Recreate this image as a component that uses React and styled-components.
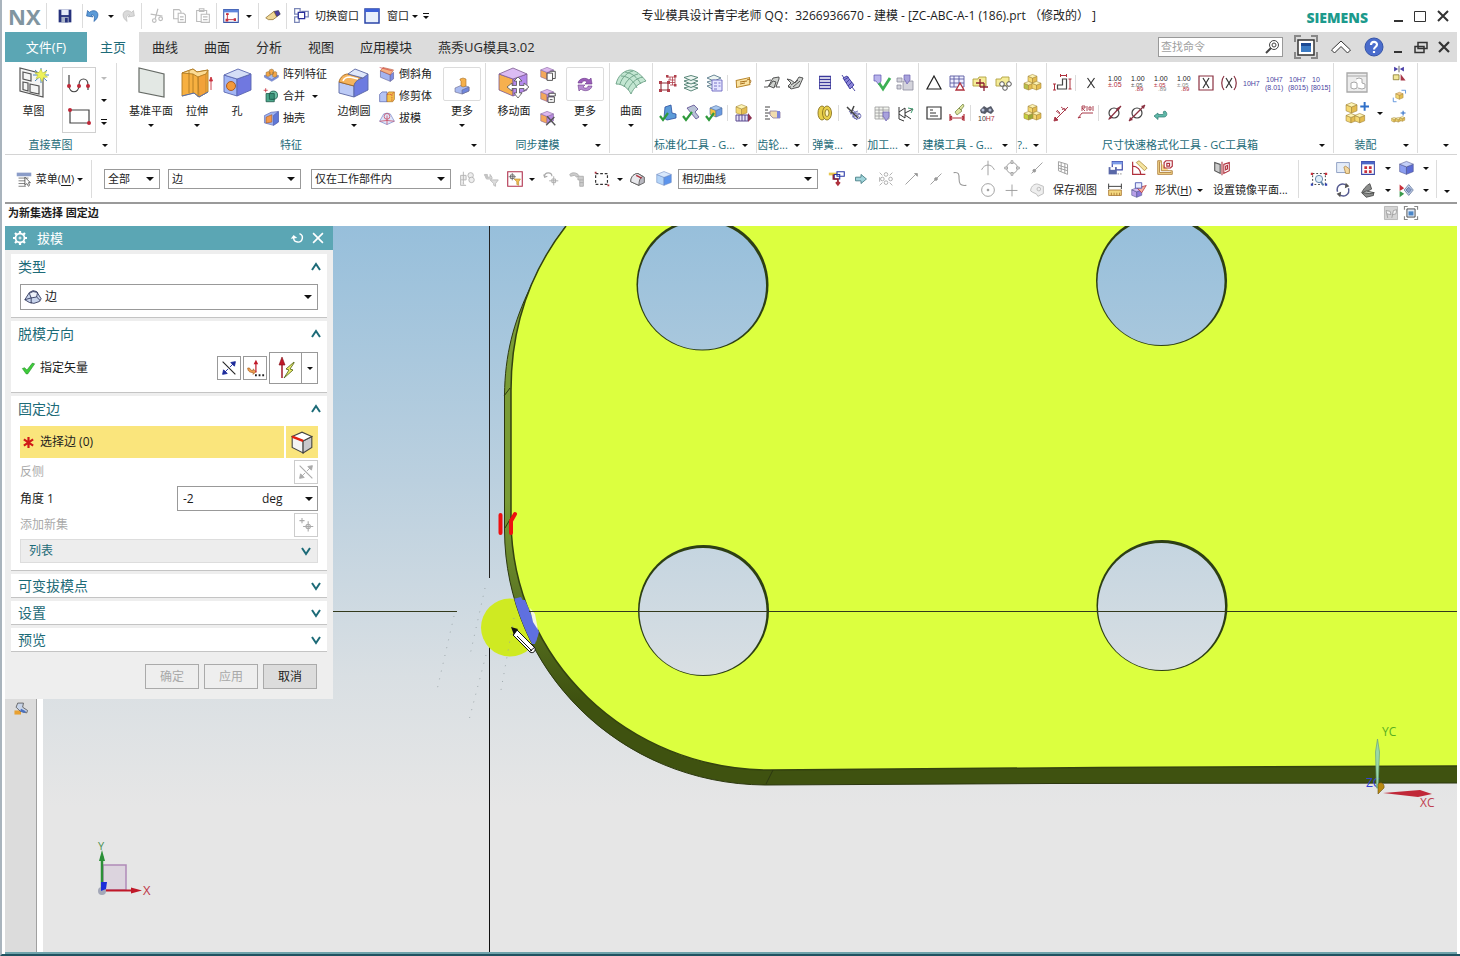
import React from "react";
import styled, { createGlobalStyle } from "styled-components";

const GlobalStyle = createGlobalStyle`
  * { box-sizing: border-box; }
  body {
    margin: 0;
    background: #fff;
    color: #1c1c1c;
    font-family: "Open Sans", "Noto Sans CJK SC", sans-serif;
    font-size: 11px;
    line-height: 16px;
  }
  button, input, select { font: inherit; color: inherit; margin: 0; }
  svg { display: block; flex: none; }
`;

const teal = "#1d6b78";

/* ---------- drawings ---------- */

const Cube = ({ x = 0, y = 0, s = 10, t = "#e8e8ff", l = "#8e9be8", r = "#6f7fe0", k = "#4a4f8a" }) => (
  <g transform={`translate(${x} ${y}) scale(${s / 10})`} stroke={k} strokeWidth={6 / s} strokeLinejoin="round">
    <path fill={l} d="M0 2.500 5 4.500V10L0 8z" />
    <path fill={r} d="M5 4.500 10 2.500V8L5 10z" />
    <path fill={t} d="M0 2.500 5 .5l5 2-5 2z" />
  </g>
);
const gold = { t: "#fdf4b4", l: "#f4d872", r: "#e4bc50", k: "#a8893a" };
const pink = { t: "#dcb8ee", l: "#f4a85a", r: "#b88ae0", k: "#7d5c9c" };

const Tol = ({ b, c1 = "#555", c2 = "#b22b3c" }) => (
  <g fontFamily="Liberation Sans, sans-serif" fontSize="7">
    <text x="5" y="9" fill="#222">1.00</text>
    <text x="5" y="15" fill={c1} fontSize={b ? 6 : 7}>±.05</text>
    {b && <text x="9" y="19" fill={c2} fontSize="6">.89</text>}
  </g>
);
const Fit = ({ a, b }) => (
  <g fontFamily="Liberation Sans, sans-serif" fill="#4a3fa0">
    <text x="2" y={b ? 10 : 14} fontSize="7">{a}</text>
    {b && <text x="1" y="18" fontSize="7">{b}</text>}
  </g>
);

const big = {
  sketch: (
    <g fill="none" stroke="#555" strokeWidth="1.2">
      <path fill="#f4f5f4" d="M2 1v23l23 6V7z" />
      <path d="M5 5l8 2v7l-8-2zM5 15l5 1v8l-5-1.500zM12 17l9 2v8l-9-2z" />
      <path stroke="#4b86b8" d="M23 1v15M15 8h16M17 3l12 11M29 3 17 14" strokeWidth="1" />
      <path fill="#eef25a" stroke="#c3c93c" strokeWidth=".6" d="M23 2l1.500 4 4-1.500-2 3.500 3 2-4 .5-1.500 4-2-4-4 1 2-3.500-3-2 4-.5z" />
    </g>
  ),
  plane: <path fill="#e3e8e4" stroke="#666b66" strokeWidth="1.200" d="M4 1v24l25 5V7z" />,
  extrude: (
    <g stroke="#b07a22" strokeWidth=".9">
      <path fill="#f7b040" d="M1 6l11-4 4 3 11-2v22l-9 5-5-4-12 3z" />
      <path fill="#fcdb93" d="M1 6l11-4 4 3 11-2-2 4-8 3-5-3z" />
      <path fill="#f2a23a" d="M17 10l8-3v19l-7 4z" strokeWidth=".6" />
      <path fill="none" d="M12 7v19M17 10v20M8 4v22" />
      <path fill="none" stroke="#4a6fc4" d="M1 29l12-3 5 4 9-5" />
      <path fill="#c8303c" stroke="#c8303c" d="M30 23V14M28.500 14h3L30 10z" />
    </g>
  ),
  hole: (
    <g stroke="#5a66b0" strokeWidth=".9">
      <path fill="#a3b6f4" d="M3 8l13 4v17L3 25z" />
      <path fill="#7078e0" d="M16 12l14-5v16l-14 6z" />
      <path fill="#d5def6" d="M3 8 17 2l13 5-14 5z" />
      <circle cx="10" cy="19" r="4.500" fill="#f49a3a" stroke="#a6521a" />
    </g>
  ),
  blend: (
    <g stroke="#5a66a4" strokeWidth=".9">
      <path fill="#bccaf6" d="M1 15v11l15 4V19z" />
      <path fill="#f5b45e" d="M1 15c1-5 5-8 9-8l15 4c-4 1-8 3-9 8z" stroke="#a5661c" />
      <path fill="#6d7be0" d="M16 19c1-5 5-7 9-8l5-4v16l-14 7z" />
      <path fill="#dfe7fa" d="M10 7l7-5 13 5-5 4z" />
      <path fill="none" stroke="#fff" strokeWidth="1.500" d="M5 14c1-3 4-4 7-4l8 2" />
    </g>
  ),
  move: (
    <g stroke="#7c5a90" strokeWidth=".8">
      <path fill="#f6b04e" d="M1 7l14 5v17L1 23z" />
      <path fill="#b48aec" d="M15 12l14-5v16l-14 6z" />
      <path fill="#dcbcf4" d="M1 7 15 1l14 6-14 5z" />
      <path fill="#fff" stroke="#555" d="M20 10l4 4h-2.500v4.500H26V16l5 4-5 4v-2.500h-4.500V26H24l-4 5-4-5h2.500v-4.500H14V24l-5-4 5-4v2.500h4.500V14H16z" />
    </g>
  ),
  surface: (
    <g stroke="#6a9f84" strokeWidth=".9" fill="none">
      <path fill="#c3e6d2" d="M1 17C3 9 8 4 15 3c6 0 11 5 16 11-7 2-12 6-15 13C13 21 8 17 1 17z" />
      <path d="M6 9c7 0 13 5 16 12M10 5c7 1 12 5 16 12M5 17C7 10 13 5 18 4M9 20c2-7 9-12 14-13M13 23c2-6 8-12 15-13" />
    </g>
  ),
  more1: (
    <g stroke="#6a6a8c" strokeWidth=".6">
      <path fill="#a9baf0" d="M9 20l7-3 7 2v4l-7 3-7-2z" />
      <path fill="#6f86dc" d="M16 22l7-3v4l-7 3z" />
      <path fill="#f5b04a" stroke="#a8702a" d="M14 11l3-1 3 1v7l-3 1-2-1v-5l-1-1z" />
    </g>
  ),
  more2: (
    <g fill="#9a5cb8" stroke="#6d3a8c" strokeWidth=".6">
      <path d="M9 15c1-5 8-6 11-3l2-2 1 6h-7l2-2c-2-2-5-1-5 1z" />
      <path fill="#b68ad0" d="M23 18c-1 5-8 6-11 3l-2 2-1-6h7l-2 2c2 2 5 1 5-1z" />
    </g>
  ),
};

const ic = {
  pattern: <g stroke="#8a6a3a" strokeWidth=".6"><path fill="#a9bdf2" stroke="#5a6ab0" d="M3 13l8-3 9 3-8 5z" /><path fill="#7f93e0" stroke="#5a6ab0" d="M3 13v2l9 5 8-5v-2l-8 5z" /><path fill="#f3a545" d="M5 13V9l3-1 2 1v4l-3 1zM9 11V6l3-1 2 1v5l-3 1zM13 14V9l3-1 2 1v5l-3 1z" /></g>,
  unite: <g fill="#4ca88c" stroke="#1d5a4a"><path d="M5 8h10v10H5z" /><circle cx="14" cy="10" r="5" fill="#6cc0a6" /><path d="M9 8h6v7H9z" fill="#3a9278" /><path stroke="#c8303c" d="M2 4h5M4.500 1.500v5" /></g>,
  shell: <g stroke="#4f5aa8" strokeWidth=".7"><path fill="#9db2f0" d="M3 8l8-4 9-1v13l-6 4-11-3z" /><path fill="#f3984a" d="M5 10l7-3v9l-7 1z" stroke="#a5561c" /><path fill="#5f78d8" d="M14 8l6-5v13l-6 4z" /></g>,
  chamfer: <g stroke="#5a5a90" strokeWidth=".7"><path fill="#a4b4f0" d="M3 7l12 5v8L3 15z" /><path fill="#7d8ce4" d="M15 12l4-3v8l-4 3z" /><path fill="#f6b183" stroke="#b04a34" d="M3 7l3-4 13 3-4 6z" /><path fill="none" stroke="#c8303c" d="M2 3l15 4" /></g>,
  trim: <g strokeWidth=".8"><path fill="#b5c4f4" stroke="#4f5aa8" d="M2 9l3-3h6v12H2z" /><path fill="#f5c34a" stroke="#a5661c" d="M11 9l2-3h7v9l-2 3h-7z" /><path fill="none" stroke="#c8303c" strokeDasharray="2 1" d="M17 9v9M11 9h6l3-3" /></g>,
  draft: <g fill="none" stroke="#7c88c8" strokeWidth=".9"><path fill="#dfe6fa" d="M2 15l5-9 4-1 4 1 5 9-9 4z" /><path stroke="#c8405a" d="M11 19V8M2 15l9-1 9 1" /><circle cx="11" cy="9" r="3.500" stroke="#c8405a" /></g>,
  mf1: <g><Cube x={3} y={3} s={14} {...pink} /><path fill="#fff" stroke="#444" d="M10 10h6v8h-6zM13 8h6v8h-3" /></g>,
  mf2: <g><Cube x={3} y={3} s={14} {...pink} /><path fill="#fff" stroke="#444" d="M11 12h7v6h-7zM12 8h7v3h-7zM13 15h3" /></g>,
  mf3: <g><Cube x={3} y={3} s={14} {...pink} /><path stroke="#555" strokeWidth="1.500" d="M10 9l9 10M18 10l-9 9" /></g>,
  std1: <g fill="none" stroke="#b0404c" strokeWidth="1.1"><path d="M4 11h7v7H4z" stroke="#8a3038" /><path d="M10 5h8v8h-5M13 5v3M15.500 5v8M11 8h7M12 10.500h6" strokeWidth=".8" /><path fill="#b0404c" stroke="none" d="M2 9h3v3H2zM10 9h3v3h-3zM2 17h3v3H2zM10 17h3v3h-3zM9 3h2.500v2.500H9zM17 3h2.500v2.500H17zM17 12h2.500v2.500H17z" /></g>,
  layers: <g fill="#eef6f2" stroke="#4a7a6c" strokeWidth=".9"><path d="M4 16l7-2 7 2-7 3z" /><path d="M4 12.500l7-2 7 2-7 3z" /><path d="M4 9l7-2 7 2-7 3z" /><path d="M4 5.500l7-2 7 2-7 3z" /></g>,
  layers2: <g fill="#eef6f2" stroke="#5a7a8c" strokeWidth=".9"><path d="M4 14l7-2 7 2-7 4zM4 10l7-2 7 2-7 4zM4 6l7-3 7 3-7 3z" /><path fill="#e5e5ff" stroke="#6a64c0" d="M9 8h10v11H9z" /><path stroke="#6a64c0" d="M11 11h3M15.500 11h2M11 14h3M15.500 14h2M11 17h3" /></g>,
  tag: <g><path fill="#fae2a0" stroke="#b8862c" d="M4 9l13-4 1 7-13 4z" transform="rotate(5 11 11)" /><path stroke="#a8701c" fill="none" d="M8 10l7-1M8 12l5-1M15 8c3-2 5 1 3 3" /></g>,
  chk1: <g><path fill="#5c9bd8" stroke="#2c4fa0" strokeWidth=".8" d="M8 5l6-2 1 8 4 1v4l-9 2-3-2z" /><path stroke="#2f9a3c" strokeWidth="2.200" fill="none" d="M3 14l3 4 5-7" /></g>,
  chk2: <g><path fill="#b9c3d6" stroke="#5a4a90" strokeWidth=".8" d="M7 6l7-3 4 4-3 3 4 5-3 2-5-6z" /><path stroke="#2f9a3c" strokeWidth="2.200" fill="none" d="M3 14l3 4 6-8" /></g>,
  chk3: <g><Cube x={7} y={3} s={12} t="#a8c8f0" l="#f0c040" r="#6a9ae0" k="#4a6aa0" /><path stroke="#2f9a3c" strokeWidth="2.200" fill="none" d="M3 14l3 4 5-7" /></g>,
  boxar: <g><Cube x={4} y={2} s={11} {...gold} /><path fill="#e8e4f8" stroke="#5a4a90" d="M4 13h12v6H4zM7 13v6M10 13v6M13 13v6" /><path fill="#8a3050" d="M16 11l4 5-4 4z" /></g>,
  gear1: <g fill="#cfd2cf" stroke="#444" strokeWidth=".9"><path d="M3 15h4l5-9 6-1v2l-3 8h4M8 14l4-5 3 1-2 6zM4 9l6-1" /></g>,
  gear2: <g fill="#cfd2cf" stroke="#444" strokeWidth=".9"><path d="M3 7l4 1 4 3 4-6 4 1-4 9-8 2-3-3 3-3zM7 13l7-5M9 15l7-6M4 15h3" /></g>,
  gear3: <g><path stroke="#444" d="M4 5h5M4 8h3M4 11h5M4 14h3M4 17h5" /><path fill="#f0dcae" stroke="#8a7aa0" strokeWidth=".8" d="M9 9h6l4 1v6h-7l-3-3z" /><path fill="#7d84d8" d="M16 9h3v7h-3z" /></g>,
  spring1: <g stroke="#3c3a9c" strokeWidth="1.600" fill="none"><path d="M5 4.500h12M5 7.500h12M5 10.500h12M5 13.500h12M5 16.500h12" /><path strokeWidth=".8" d="M5.500 4v13M16.500 4v13" /></g>,
  spring2: <g fill="#8a84d8" stroke="#3c3a9c" strokeWidth=".9"><path d="M6 6l4-2 7 9-4 4z" /><path fill="none" d="M5 3l2 3M7 8l5-3M9 11l4-4M11 14l4-4M15 15l3 4" /></g>,
  spring3: <g fill="#e8cf4a" stroke="#8a7420" strokeWidth=".9"><ellipse cx="8" cy="11" rx="4" ry="7" /><ellipse cx="13" cy="11" rx="4.500" ry="7" /><ellipse cx="13" cy="11" rx="2" ry="3.500" fill="#fff7c0" /></g>,
  spring4: <g fill="none" stroke="#5a5aa8" strokeWidth=".8"><path d="M6 9l8 9M9 7l8 9M7 12l8-3M9 15l8-3" /><ellipse cx="14" cy="14" rx="4" ry="3" /><path stroke="#444" strokeWidth="1.500" d="M4 5l11 11M11 4L8 11" /></g>,
  mach1: <g><path fill="#b9b4ec" stroke="#5a50b0" strokeWidth=".7" d="M3 3h7v6l-2 4-3-4H3z" /><path stroke="#3cb054" strokeWidth="2.800" fill="none" d="M8 11l4 6 7-11" /></g>,
  mach2: <g><path fill="#d4d4dc" stroke="#8a8a9c" strokeWidth=".8" d="M9 9h10v9H9zM3 6h5v4H3zM3 13h4v4H3z" /><path fill="#a8a2dc" stroke="#6a60b0" strokeWidth=".7" d="M10 3h6v5l-3 4-2-4h-1z" /></g>,
  mach3: <g><path fill="#f2f4ee" stroke="#9a9a9a" strokeWidth=".8" d="M4 5h14v12H4zM4 8h14M4 11h14M4 14h14M8 5v12M12 5v12" /><path fill="#a8a2dc" stroke="#6a60b0" strokeWidth=".7" d="M12 10h6v5l-3 4-2-4h-1z" /></g>,
  mach4: <g fill="none" stroke="#333"><path d="M5 5v12l5 2M5 10l6-4v10l-6-4M11 11l8-4M11 13l6 4" /><path stroke="#3a9a6c" d="M14 6l5 1-2 4" /></g>,
  tri: <path fill="none" stroke="#222" strokeWidth="1.200" d="M11 4l7 13H4z" />,
  tbl: <g><path fill="#f0f0ff" stroke="#5a5aa0" strokeWidth=".9" d="M4 4h14v11H4zM4 7h14M4 11h14M8 4v11M13 4v11" /><path fill="#fff" stroke="#b0303c" strokeWidth="1.300" d="M14 11l4 7h-8z" /></g>,
  note: <g fill="none" stroke="#333" strokeWidth="1.200"><path d="M4 5h14v12H4zM7 8h3M7 11h6M7 14h8" /></g>,
  brush: <g><path fill="#dfe5a0" stroke="#7a8a4a" strokeWidth=".8" d="M9 10l4-4 3 3-5 4zM13 6l4-4 1 2-3 4z" /><path stroke="#b0303c" strokeWidth="1.200" d="M4 12v7M18 12v7M4 16h14M6 14l-2 2 2 2M16 14l2 2-2 2" fill="none" /></g>,
  fold1: <g><path fill="#f5ec98" stroke="#b0a040" strokeWidth=".9" d="M4 7h5l1-2h7v9H4z" /><path stroke="#8a2030" strokeWidth="1.300" d="M11 7v8M7 11h8M15 11v8M11 15h8" /></g>,
  fold2: <g><path fill="#f5ec98" stroke="#b0a040" strokeWidth=".9" d="M4 7h5l1-2h7v9H4z" /><g fill="#fff" stroke="#555"><circle cx="10" cy="12" r="2.300" /><circle cx="13" cy="16" r="2.300" /><circle cx="17" cy="12" r="2.300" /></g></g>,
  find: <g><path fill="#555a68" d="M5 8l4-4 3 2 4-2 3 5-3 3-4-2-2 2-4-1z" /><circle cx="8" cy="8" r="1.500" fill="#b8c0d8" /><circle cx="15" cy="8" r="1.500" fill="#b8c0d8" /><text x="3" y="19" fontSize="7" fontFamily="Liberation Sans, sans-serif" fill="#333">10<tspan fill="#b0303c">H7</tspan></text></g>,
  gbox1: <g><Cube x={7} y={2} s={9} {...gold} /><Cube x={3} y={9} s={9} {...gold} l="#b8c04a" /><Cube x={11} y={9} s={9} {...gold} /></g>,
  gbox2: <g><Cube x={7} y={2} s={9} {...gold} /><Cube x={11} y={9} s={9} {...gold} /><Cube x={3} y={9} s={9} {...gold} l="#c4d040" r="#9aa83a" /></g>,
  dim: <g fill="none" stroke="#444"><path strokeWidth="1.200" d="M6.500 17h9V7h-4v6h-5z" /><path stroke="#b0303c" d="M3.500 12v6M2 12h3M2 18h3M19 7v10M17.500 7h3M17.500 17h3M9.500 2v3M15.500 2v3M10 3.500h5" /></g>,
  x: <path stroke="#333" fill="none" strokeWidth="1.200" d="M7.500 6l7 10M14.500 6l-7 10" />,
  t1: <Tol c1="#b22b3c" />,
  t2: <Tol b />,
  t3: <Tol b c1="#b22b3c" c2="#888" />,
  t4: <Tol b c1="#888" />,
  boxx: <g fill="none" strokeWidth="1.200"><path stroke="#8a3040" d="M4 4h14v14H4z" /><path stroke="#333" d="M8 6l6 10M14 6L8 16" /></g>,
  parx: <g fill="none" strokeWidth="1.200"><path stroke="#8a3040" d="M6 4C3 8 3 14 6 18M16 4c3 4 3 10 0 14" /><path stroke="#333" d="M8 6l6 10M14 6L8 16" /></g>,
  f1: <Fit a="10H7" />,
  f2: <Fit a="10H7" b="(8.01)" />,
  f3: <Fit a="10H7" b="(8015)" />,
  f4: <Fit a="  10" b="[8015]" />,
  lead1: <g fill="none" stroke="#a83848"><path d="M4 18L17 5" /><path strokeWidth=".9" d="M5 9l4 3M6 8l3 3M10 5l4 3M11 8c2-3 5-1 3 1" /><path fill="#a83848" d="M3 19l1-4 3 3z" /></g>,
  lead2: <g fill="none" stroke="#a83848"><path d="M4 16l4-5h11M4 16l3-1" /><path strokeWidth=".9" d="M8 9V4h3v2H8l3 3M13 4v5M15 5v3h2V5zM19 4v5" /></g>,
  dia1: <g fill="none" stroke="#444" strokeWidth="1.200"><circle cx="11" cy="11" r="5" /><path stroke="#8a3040" d="M6 17L18 4" /><path fill="#8a3040" stroke="none" d="M8 13l1 3-4 2zM13 9l1-3 4-2-2 4z" /></g>,
  dia2: <g fill="none" stroke="#444" strokeWidth="1.200"><circle cx="11" cy="11" r="5" /><path stroke="#8a3040" d="M3 19L19 3" /><path fill="#8a3040" stroke="none" d="M3 19l1-4 3 3zM19 3l-1 4-3-3z" /></g>,
  ret: <path fill="#5fb8a8" stroke="#2c7a70" strokeWidth=".7" d="M5 14l4-3v1.500h4c2 0 2-1.500 1-2.500l2-1c3 2 2 6-1 6H9v2.500z" />,
  asm0: <g fill="#ececec" stroke="#a8a8a8"><path d="M1 1h20v19H1z" strokeWidth="1.300" /><path d="M1 4h20" /><path fill="#fff" d="M5 11l3-1 3 1v5l-3 1-3-1zM10 7l3-1 3 1v4l3 1v4l-3 1-4-1" /></g>,
  asm1: <g><Cube x={1} y={1} s={10} {...gold} /><Cube x={1} y={11} s={9} {...gold} /><Cube x={9} y={11} s={9} {...gold} /><path stroke="#2f6fc8" strokeWidth="1.800" d="M18 1v8M14 5h8" /></g>,
  mir: <g><path fill="#4a3fa8" d="M5 2l5 3-5 3zM17 2l-5 3 5 3z" /><path stroke="#444" d="M11 1v8" /><path fill="#f2e89a" stroke="#8a7a30" d="M4 12h7v6H4z" /><path fill="#a83848" d="M13 11l6 8h-6z" /></g>,
  asm2: <g><path fill="none" stroke="#4a86d8" d="M4 13v5h4M14 4h5v4" /><Cube x={7} y={6} s={9} {...gold} t="#f7c98a" /></g>,
  asm3: <g><Cube x={2} y={10} s={6} {...gold} /><Cube x={7} y={10} s={6} {...gold} /><Cube x={12} y={9} s={6} {...gold} /><path stroke="#2f6fc8" strokeWidth="1.300" d="M16 2v6M13 5h6" /></g>,

  save: <g><path fill="#26327c" d="M4 4h14v14H4z" /><path fill="#e6ecf8" d="M7 4h8v6H7z" /><path fill="#aab4c8" d="M7 12h8v6H7z" /><path fill="#26327c" d="M11 13h3v5h-3z" /></g>,
  undo: <path fill="#5c9bd8" stroke="#2a62a8" strokeWidth=".8" d="M4 11l1-6 2 2c5-4 11-1 9 5-1 3-3 4-4 5 1-4 1-8-3-7l2 2z" />,
  redo: <path fill="#dadada" stroke="#bbb" strokeWidth=".8" d="M18 11l-1-6-2 2c-5-4-11-1-9 5 1 3 3 4 4 5-1-4-1-8 3-7l-2 2z" />,
  cut: <g fill="none" stroke="#bcbcbc" strokeWidth="1.300"><path d="M12 3l-3 11M4 9l13 2" /><circle cx="8" cy="16" r="2" /><circle cx="15" cy="14" r="2" /></g>,
  copy: <g fill="#fff" stroke="#bcbcbc" strokeWidth="1.200"><path d="M4 4h6l2 2v8H4z" /><path d="M9 8h6l2 2v8H9zM11 12h4M11 15h4" /></g>,
  paste: <g fill="#fff" stroke="#bcbcbc" strokeWidth="1.200"><path d="M4 5h11v12H4zM7 3h5v3H7z" /><path d="M9 9h9v9H9zM11 12h5M11 15h5" /></g>,
  win: <g><path fill="#fff" stroke="#3c58a8" strokeWidth="1.200" d="M3 4h16v14H3z" /><path fill="#5f86dc" d="M3 4h16v3H3z" /><path stroke="#c8303c" strokeWidth="1" d="M7 8v7h8" fill="none" /><path fill="#c8303c" d="M5 14h3v3H5zM5.500 8h3v2h-3zM14 13.500h2.500v3H14z" /></g>,
  eraser: <g><path fill="#4a3fa0" stroke="#333" strokeWidth=".6" d="M12 6l5-1 2 4-4 3z" /><path fill="#f0d898" stroke="#8a6a2a" strokeWidth=".8" d="M3 13l9-7 3 6-4 3H6z" /></g>,
  sw: <g fill="#fff" strokeWidth="1.400"><path stroke="#7c88b8" d="M4 3h6v6H4zM12 6h7v6h-7zM4 12h5v6H4z" /><path stroke="#2a2f9a" d="M8 7h7v7H8z" /></g>,
  menu: <g><path fill="#8a9cc8" d="M3 4h16v4H3z" /><path stroke="#777" d="M5 10h11M5 13h8M5 16h8M5 19h8" /><path fill="#fff" stroke="#333" strokeWidth=".8" d="M12 9v9l2-2 2 3 1-1-1-3h2z" /></g>,
  s1: <g fill="#eee" stroke="#b4b4b4"><path d="M4 7h6v5H4zM7 3v14M4 12v6h6" /><circle cx="15" cy="7" r="3" /><circle cx="16" cy="12" r="3" /></g>,
  s2: <g fill="#c4c4c4"><path d="M4 6h3v3h3V6l2 3v2H6zM10 12h9l-3 4v3l-2-1v-2z" fill="#ddd" stroke="#bbb" /><path d="M3 6h3l3 4-3 1z" /></g>,
  s3: <g><path fill="#fff" stroke="#b0304c" strokeWidth="1.200" d="M3 3h16v16H3z" /><path fill="none" stroke="#555" strokeWidth=".8" d="M8 4.500v8M4 8.500h8M6 6.500h4v4H6z" /><path fill="#f0c050" stroke="#b8862c" strokeWidth=".7" d="M10 11h7l-2 3v4l-2-1v-3z" /></g>,
  s4: <g fill="none" stroke="#aaa" strokeWidth="1.300"><path d="M4 8c0-5 8-5 8 0M3 6l1 3 3-1" /><path d="M14 8v10M9 13h10M12 11h4v4h-4z" strokeWidth="1" /></g>,
  s5: <g fill="#ccc" stroke="#aaa" strokeWidth=".9"><path d="M3 6c3-3 8-2 10 1l-2 2-3-2-4 1zM12 8h6v11h-4V12h-2zM14 15h4M14 12h4" /></g>,
  s6: <g fill="none"><path stroke="#333" strokeDasharray="3 2" strokeWidth="1.300" d="M4 5h13v12H4z" /><path fill="#b0303c" d="M3 3h2v2H3zM17 17h2v2h-2z" /></g>,
  s7: <g stroke="#555" strokeWidth=".9"><path fill="#b8b8c0" d="M3 14c0-6 4-9 8-9l7 4v6l-6 3z" /><path fill="#e8e8ec" d="M3 14c0-6 4-9 8-9l5 3c-3 2-4 5-4 10z" /><path stroke="#b0303c" strokeWidth="1.500" d="M9 7l6 3" /></g>,
  s8: <Cube x={3} y={2} s={16} t="#d8e8fc" l="#b4d4f8" r="#5c94ec" k="#6a86c0" />,
  s9: <g><path fill="#e8c850" d="M2 4h10v3H2z" /><path fill="#fff" stroke="#2a3aa8" strokeWidth="1.200" d="M11 3h8v5h-8zM8 6h6v5H8z" /><path fill="none" stroke="#8a2030" strokeWidth="1.800" d="M7 6v5h5v4" /><path fill="#b0303c" d="M9 15l3-2 3 2-3 4z" /></g>,
  s10: <path fill="#9fd4da" stroke="#4a8088" d="M5 9h6V6l6 5-6 5v-3H5z" />,
  s11: <g fill="none" stroke="#aaa"><path d="M4 4l3 3M4 18l3-3M18 4l-3 3M18 18l-3-3M4 9v5" /><circle cx="11" cy="6" r="2" /><circle cx="11" cy="15" r="2" /><circle cx="7" cy="11" r="2" /><circle cx="16" cy="11" r="2" /></g>,
  s12: <g stroke="#999"><path d="M5 17L16 6" /><path fill="#999" d="M15 5h3v3z" /></g>,
  s13: <g stroke="#999"><path d="M5 17L17 5" /><circle cx="11" cy="11" r="1.500" fill="#999" /></g>,
  s14: <path fill="none" stroke="#999" strokeWidth="1.200" d="M4 4c6-1 6 2 6 7s1 8 8 7" />,
  n1: <g fill="none" stroke="#999"><path d="M11 3v16M4 13c3-7 11-7 14 0" /></g>,
  n2: <g fill="#fff" stroke="#999"><circle cx="11" cy="11" r="6" fill="none" /><path d="M10 3h2v3h-2zM10 16h2v3h-2zM3 10h3v2H3zM16 10h3v2h-3z" /></g>,
  n3: <g stroke="#999"><path d="M5 17L17 5" /><circle cx="8" cy="14" r="1.500" fill="#999" /></g>,
  n4: <path fill="none" stroke="#999" d="M6 4l10 3v11L6 14zM9 5v10M13 6v11M6 8l10 3M6 11l10 3" />,
  n5: <g fill="none" stroke="#999"><circle cx="11" cy="11" r="7" /><circle cx="11" cy="11" r="1" fill="#999" /></g>,
  n6: <path stroke="#999" d="M11 5v13M4 11.500h13" />,
  n7: <g fill="#eee" stroke="#bbb"><path d="M4 12c0-6 6-9 9-7l5 2v8l-6 3c-1-4-5-3-8-6z" /><circle cx="13" cy="10" r="2" /></g>,
  v1: <g><path fill="#fff" stroke="#3c48a8" strokeWidth="1.300" d="M8 4h11v9H8z" /><path fill="#7c9ce8" d="M8 4h11v3H8z" /><path fill="#5a68a8" d="M4 10h9v8H4z" /><path fill="#fff" d="M6 10h5v3H6z" /><path stroke="#333" strokeDasharray="1 2" d="M14 17.500h6" /></g>,
  v2: <g><path fill="none" stroke="#b0303c" strokeWidth="1.300" d="M4 4v14h14M4 9c5 0 9 4 9 9" /><path fill="#f4e4a0" stroke="#a88430" strokeWidth=".8" d="M8 5l3-2 9 8-3 3z" /></g>,
  v3: <g><path fill="#f8dc90" stroke="#a87430" strokeWidth=".9" d="M3 3h4v11h12v4H3zM5 4v12h13" /><path fill="none" stroke="#b0303c" strokeWidth="1.300" d="M10 5l2-2h7v6l-2 2h-7zM13 6h3v3h-3z" /></g>,
  v4: <g><path stroke="#333" d="M4 4v6M18 4v6M4 7h14" /><path fill="#f4d880" stroke="#a87430" strokeWidth=".9" d="M4 11h14v6H4zM7 14v3M10 14v3M13 14v3M16 14v3" /></g>,
  v5: <g><Cube x={3} y={8} s={11} t="#d8b8f0" l="#b8a0e8" r="#8c7ad8" /><path fill="#f4b0a0" stroke="#b0303c" strokeWidth=".8" d="M9 9l10-3-5 8z" /><path stroke="#3c48a8" fill="#e8ecff" strokeWidth=".9" d="M7 3h7v6H7z" /></g>,
  v6: <g fill="none" strokeWidth="1.200"><path stroke="#555" fill="#ccc" d="M3 5l6 2v10l-6-3z" /><path stroke="#b0303c" d="M11 4v15M13 7l6-2v9l-6 3zM15 9l2-1v4l-2 1z" /></g>,
  w1: <g fill="none"><path stroke="#333" strokeDasharray="2 2" d="M4 5h14v12H4z" /><circle cx="11" cy="11" r="4" fill="#e0eef8" stroke="#5a80a8" /><path stroke="#5a80a8" strokeWidth="2" d="M13 14l3 4" /><path fill="#c8303c" d="M2 4h2.500v2.500H2zM17.500 4H20v2.500h-2.500z" /><path fill="#3040b0" d="M2 16h2.500v2.500H2zM17.500 16H20v2.500h-2.500z" /></g>,
  w2: <g><path fill="#e4ecf8" stroke="#8a9cc0" d="M4 5h14v11H4z" /><path fill="#f4d8a0" stroke="#a8803a" strokeWidth=".8" d="M12 10l2-1 4 3v5h-4z" /></g>,
  w3: <g><path fill="#fff" stroke="#3c48a8" strokeWidth="1.200" d="M4 4h14v14H4z" /><path fill="#4c68c8" d="M4 4h14v3H4z" /><path fill="#c8303c" d="M7 9h3v3H7zM12 9h3v3h-3zM7 13.500h3v3H7zM12 13.500h3v3h-3z" /></g>,
  w4: <Cube x={4} y={3} s={15} t="#c4d0f8" l="#8c9ef0" r="#5c6cd4" />,
  w5: <g fill="none" stroke="#555a90" strokeWidth="1.600"><path d="M5 13c-2-7 5-11 10-7M17 9c2 7-5 11-10 7" /><path fill="#555" stroke="none" d="M14 3l4 4-5 2zM8 19l-4-4 5-2z" /></g>,
  w6: <g fill="#8a8c8a" stroke="#444" strokeWidth=".9"><path d="M4 14c2-4 5-8 9-10l2 6-6 3 8 1v3l-8 2z" /><path fill="#c4c8c4" d="M5 14l8 1 5-1-9-2z" /></g>,
  w7: <g strokeWidth=".8"><path fill="#c8303c" d="M4 5l5 4-5 3z" /><path fill="#3a9a4c" d="M4 12l5 3-5 4z" /><path fill="#c4d4f0" stroke="#5a6a90" d="M14 5l5 6-5 6-5-6z" /><path fill="#8a9cc8" stroke="#5a6a90" d="M14 8l3 3-3 3-3-3z" /></g>,
  flags: <g><path fill="#d4d4d4" stroke="#b0b0b0" d="M3 3h16v16H3z" /><path stroke="#888" fill="#f4f4f4" strokeWidth=".8" d="M7 17L5 8l5 1 1 4-5-1M12 17l2-9 4-1-1 5-4 1" /></g>,
  full: <g fill="none"><path stroke="#888" strokeWidth="1.400" d="M3 7V3h4M15 3h4v4M19 15v4h-4M7 19H3v-4" /><path fill="#dfe9f6" stroke="#333" d="M6 6h10v10H6z" /><path fill="#4a86c8" d="M8 9h6v5H8z" /></g>,
  draftSel: <g fill="#c8d4ec" stroke="#222a50" strokeWidth=".9"><path d="M2 14l5-8 4-2 4 1 5 8-2 3-6 2-5-1z" /><path fill="#eef2fa" d="M7 7l4-2 5 1-1 5-6 1z" /><path fill="none" d="M2 14l7-2M9 12v6M15 11l4 4" /></g>,
  ok: <path fill="#3ecb3a" stroke="#1d8a24" strokeWidth=".7" d="M3 11l3-1 3 3 7-9 3 1-9 13H8z" />,
  star: <path stroke="#d01818" strokeWidth="2.800" d="M11 4v14M5 7l12 8M17 7L5 15" />,
  rev: <g stroke="#222"><path strokeWidth="1.200" d="M4 4l14 14" /><path stroke="#1c2a9a" fill="#1c2a9a" d="M5 17l5-5M17 5l-5 5M4 18l1-5 4 4zM18 4l-1 5-4-4z" /></g>,
  revOff: <g stroke="#aaa"><path strokeWidth="1.200" d="M4 4l14 14" /><path fill="#aaa" d="M5 17l5-5M17 5l-5 5M4 18l1-5 4 4zM18 4l-1 5-4-4z" /></g>,
  vec: <g><path fill="#f0a050" stroke="#a86020" strokeWidth=".8" d="M3 11c0 4 3 5 6 5v2l3-3-3-3v2c-2 0-3-1-4-3z" /><path stroke="#c01828" strokeWidth="1.300" d="M12 16V6" /><path fill="#c01828" d="M12 2l2.500 5h-5z" /><path fill="#222" d="M11 18h2v2h-2zM15 18h2v2h-2zM19 18h2v2h-2z" /></g>,
  flash: <g><path stroke="#a01828" strokeWidth="1.500" d="M7 21V8" /><path fill="#c01828" stroke="#801018" strokeWidth=".6" d="M7 0l3 8H4z" /><path fill="#eef06a" stroke="#5a6a20" strokeWidth=".9" d="M19 5l-8 7 3 1-5 8 9-8-3-1 4-6z" /></g>,
  addset: <path fill="none" stroke="#aaa" strokeWidth="1.500" d="M2 5h7M5.500 1.500v7M14 6v14M7 13h14M11 13a3 3 0 1 0 6 0 3 3 0 1 0-6 0" />,
  edge: <g stroke="#444" strokeWidth="1"><path fill="#f4f4f4" d="M2 6l10 4v11L2 16z" /><path fill="#c8c8cc" d="M12 10l8-4v10l-8 5z" /><path fill="#fff" d="M2 6l9-4 9 4-8 4z" /><path stroke="#e02010" strokeWidth="2.200" d="M2 6l10 4" /></g>,
  role: <g><path fill="#e8a030" d="M3 14h8v5H3z" /><path fill="#c8d4e8" stroke="#555" d="M7 5h7l-1 5 6 4-1 3-8-2-5-5z" /><path fill="#4a70c0" d="M11 12l6 3-2 2-5-2z" /></g>,
  gearw: <g fill="none" stroke="#fff"><circle cx="11" cy="11" r="4.500" strokeWidth="1.800" /><circle cx="11" cy="11" r="1" /><path strokeWidth="2.200" d="M11 4v2M11 16v2M4 11h2M16 11h2M6 6l1.500 1.500M14.500 14.500L16 16M16 6l-1.500 1.500M7.500 14.500L6 16" /></g>,
  reset: <g fill="none" stroke="#fff" strokeWidth="2"><path d="M13 5a6 6 0 1 1-8 6" /><path fill="#fff" stroke="none" d="M1 12l4-5 5 4z" /></g>,
  close: <path stroke="#fff" strokeWidth="2" d="M5 5l12 12M17 5L5 17" />,
};

const Ico = ({ n, s = 20 }) => (
  <svg width={s} height={s} viewBox="0 0 22 22" aria-hidden="true">{ic[n]}</svg>
);
const Big = ({ n }) => (
  <svg width="32" height="32" viewBox="0 0 32 32" aria-hidden="true">{big[n]}</svg>
);
const Down = ({ c = "#111", bar, wide }) => (
  <svg width="8" height="8" viewBox="0 0 8 8" aria-hidden="true">
    {bar && <path stroke={c} d="M1 1.500h6" />}
    <path fill={c} d={bar ? "M1 4h6L4 7z" : wide ? "M0 2h8L4 6z" : "M1 3h6L4 6z"} />
  </svg>
);
const Chevron = ({ up }) => (
  <svg width="12" height="10" viewBox="0 0 12 10" aria-hidden="true">
    <path fill="none" stroke={teal} strokeWidth="2" d={up ? "M2 8l4-6 4 6" : "M2 2l4 6 4-6"} />
  </svg>
);

/* ---------- shared controls ---------- */

const Plain = styled.button`
  display: flex;
  align-items: center;
  justify-content: center;
  padding: 0;
  border: 0;
  background: transparent;
  white-space: nowrap;
`;
const ToolButton = styled(Plain)`
  width: ${(p) => p.$w || 23}px;
  height: ${(p) => p.$h || 22}px;
  flex: none;
`;
const Tool = ({ n, w, h, s, label }) => (
  <ToolButton $w={w} $h={h} aria-label={label || n}><Ico n={n} s={s} /></ToolButton>
);
const Drop = ({ w = 12, bar, c }) => (
  <ToolButton $w={w} aria-label="更多选项"><Down bar={bar} c={c} /></ToolButton>
);

const ComboBox = styled.div`
  display: grid;
  flex: none;
  align-items: center;
  width: ${(p) => p.$w}px;
  height: 20px;
  margin-right: ${(p) => p.$gap || 0}px;
  border: 1px solid #999;
  background: #fff;
  > * { grid-area: 1 / 1; }
  > svg { justify-self: end; margin-right: 5px; pointer-events: none; }
`;
const Select = styled.select`
  appearance: none;
  width: 100%;
  height: 100%;
  padding: 0 16px 0 ${(p) => p.$pad || 3}px;
  border: 0;
  background: transparent;
`;
const Combo = ({ w, gap, label, value }) => (
  <ComboBox $w={w} $gap={gap}>
    <Select aria-label={label}><option>{value}</option></Select>
    <Down wide />
  </ComboBox>
);

/* ---------- window frame ---------- */

const Frame = styled.div`
  display: flex;
  flex-direction: column;
  min-height: 100vh;
  padding: 0 3px;
  border-left: 2px solid #a9b4bd;
  border-bottom: 2px solid #1f5260;
  background: #fff;
`;

const TitleBar = styled.header`
  display: flex;
  align-items: center;
  height: 32px;
  padding-right: 3px;
`;
const Logo = styled.span`
  width: 41px;
  padding-left: 3px;
  color: #8195a0;
  font: 700 22px/32px "Open Sans", sans-serif;
`;
const Rule = styled.i`
  width: 1px;
  height: ${(p) => p.$h || 26}px;
  flex: none;
  margin: 0 ${(p) => p.$r || 0}px 0 ${(p) => p.$l || 0}px;
  background: #dcdcdc;
`;
const Title = styled.h1`
  flex: 1;
  margin: 0;
  text-align: center;
  font-size: 12px;
  font-weight: 400;
  white-space: nowrap;
`;
const Brand = styled.span`
  margin-right: 20px;
  padding-top: 4px;
  color: #1c9a8c;
  font: 800 14px/16px "Open Sans", sans-serif;
`;

const TabBar = styled.nav`
  display: flex;
  align-items: center;
  height: 30px;
  background: #dcdcdc;
`;
const FileTab = styled(Plain)`
  width: 82px;
  height: 30px;
  background: #5ba6b4;
  color: #fff;
  font-size: 13px;
`;
const Tab = styled(Plain)`
  height: 30px;
  padding: 0 13px;
  font-size: 13px;
  background: ${(p) => (p.$on ? "#fff" : "transparent")};
  color: ${(p) => (p.$on ? teal : "#2a2a2a")};
`;
const Spacer = styled.div`flex: 1;`;
const Search = styled.label`
  display: flex;
  align-items: center;
  width: 125px;
  height: 20px;
  margin-right: 10px;
  border: 1px solid #999;
  background: #fff;
  input {
    flex: 1;
    min-width: 0;
    border: 0;
    outline: 0;
    padding: 0 2px;
    background: transparent;
  }
  input::placeholder { color: #a0a0a0; }
`;

/* ---------- ribbon ---------- */

const Ribbon = styled.section`
  display: flex;
  height: 93px;
  padding-top: 1px;
  border-bottom: 1px solid #d4d4d4;
`;
const GroupBox = styled.section`
  display: flex;
  flex-direction: column;
  flex: ${(p) => (p.$w ? `0 0 ${p.$w}px` : "1")};
  min-width: 0;
  height: 90px;
  border-right: ${(p) => (p.$w ? 1 : 0)}px solid #dcdcdc;
`;
const GroupBody = styled.div`
  display: flex;
  height: 75px;
  padding-left: ${(p) => p.$pad || 0}px;
`;
const GroupFoot = styled.footer`
  display: flex;
  align-items: center;
  height: 16px;
  color: ${teal};
  white-space: nowrap;
  span { flex: 1; text-align: center; min-width: 0; }
  button { margin-right: 2px; }
`;
const Group = ({ w, pad, name, children }) => (
  <GroupBox $w={w}>
    <GroupBody $pad={pad}>{children}</GroupBody>
    <GroupFoot><span>{name}</span><Drop w={w < 40 ? 16 : 18} /></GroupFoot>
  </GroupBox>
);

const BigButton = styled(Plain)`
  flex-direction: column;
  justify-content: flex-start;
  width: ${(p) => p.$w}px;
  height: 68px;
  margin-top: 4px;
  span { margin: 4px 0 2px; }
`;
const Tile = styled.i`
  display: flex;
  align-items: center;
  justify-content: center;
  width: 38px;
  height: ${(p) => (p.$framed ? 34 : 32)}px;
  margin-bottom: ${(p) => (p.$framed ? -2 : 0)}px;
  border: ${(p) => (p.$framed ? 1 : 0)}px solid #dcdcdc;
  border-radius: 2px;
`;
const BigTool = ({ n, w, label, arrow, framed }) => (
  <BigButton $w={w}>
    <Tile $framed={framed}><Big n={n} /></Tile>
    <span>{label}</span>
    {arrow && <Down />}
  </BigButton>
);

const Stack = styled.div`
  display: flex;
  flex-direction: column;
  align-items: flex-start;
  flex: none;
  width: ${(p) => p.$w}px;
  margin-left: ${(p) => p.$l || 0}px;
`;
const TextTool = styled(Plain)`
  height: 22px;
  gap: 3px;
`;
const Rows = styled.div`padding-top: 5px;`;
const Row = styled.div`
  display: flex;
  align-items: center;
  height: 30px;
`;
const Tools = ({ rows }) => (
  <Rows>
    {rows.map((r, i) => (
      <Row key={i}>
        {r.split(" ").map((n, j) => (n === "|" ? <Rule key={j} $h={16} $l={2} $r={3} /> : <Tool key={j} n={n} s={22} h={24} />))}
      </Row>
    ))}
  </Rows>
);
const Gallery = styled.div`
  display: flex;
  flex-direction: column;
  align-items: center;
  justify-content: space-around;
  flex: none;
  width: 34px;
  height: 66px;
  margin-top: 4px;
  border: 1px solid #d0d0d0;
`;
const GalleryNav = styled.div`
  display: flex;
  flex-direction: column;
  margin: 4px 0 0 2px;
`;

/* ---------- selection bar ---------- */

const SelectionBar = styled.section`
  display: flex;
  align-items: center;
  height: 49px;
  border-bottom: 2px solid #9a9a9a;
`;
const MenuButton = styled(Plain)`
  gap: 2px;
  width: 85px;
  padding-left: 3px;
  u { text-underline-offset: 2px; }
`;
const Cluster = styled.div`
  display: grid;
  grid-template-columns: 24px 25px 24px 54px 24px 24px 58px 88px;
  grid-auto-rows: 22px;
  align-items: center;
  margin-left: 4px;
`;
const ViewCluster = styled.div`
  display: grid;
  grid-template-columns: 25px 26px 12px 26px 12px;
  grid-auto-rows: 22px;
  align-items: center;
`;
const LabelButton = styled(Plain)`
  gap: 4px;
  justify-content: flex-start;
  padding-left: 4px;
`;
const BarEnd = styled.div`
  align-self: flex-end;
  margin: 0 4px 0 0;
`;
const CueLine = styled.section`
  display: flex;
  align-items: center;
  height: 22px;
  padding: 0 36px 4px 3px;
  font-weight: 600;
  p { flex: 1; margin: 0; }
`;

/* ---------- work area ---------- */

const WorkArea = styled.main`
  flex: 1;
  display: grid;
  grid-template: auto 1fr / 38px 290px 1fr;
  border-bottom: 2px solid #6fa3ab;
`;
const ResourceBar = styled.aside`
  grid-area: 2 / 1;
  justify-self: start;
  width: 32px;
  border-right: 1px solid #a0a0a0;
  background: #dcdcdc;
`;
const Canvas = styled.div`
  grid-area: 1 / 2 / 3 / 4;
  position: relative;
  min-height: 720px;
  overflow: hidden;
  svg { position: absolute; inset: 0; width: 100%; height: 100%; }
`;
const Dialog = styled.form`
  grid-area: 1 / 1 / 2 / 3;
  z-index: 1;
  display: flex;
  flex-direction: column;
  background: #eee;
  font-size: 12px;
`;
const DialogHead = styled.header`
  display: flex;
  align-items: center;
  height: 24px;
  padding: 0 5px 0 4px;
  background: #5ba6b4;
  color: #fff;
  h2 { flex: 1; margin: 0 0 0 6px; font-size: 13px; font-weight: 400; }
`;
const Panel = styled.section`
  margin: ${(p) => (p.$first ? 4 : 3)}px 6px 0;
  padding-bottom: ${(p) => (p.$open ? 7 : 0)}px;
  background: #fff;
  border-bottom: 1px solid #c4c4c4;
`;
const PanelHead = styled.button`
  display: flex;
  align-items: center;
  justify-content: space-between;
  width: 100%;
  height: ${(p) => (p.$open ? 26 : 23)}px;
  padding: 0 5px 0 7px;
  border: 0;
  background: transparent;
  color: ${teal};
  font-size: 14px;
`;
const PanelBody = styled.div`
  display: flex;
  flex-direction: column;
  gap: 2px;
  padding: 4px 9px 0;
`;
const Section = ({ name, first, children }) => (
  <Panel $open={!!children} $first={first}>
    <PanelHead type="button" $open={!!children} aria-expanded={!!children}>
      {name}<Chevron up={!!children} />
    </PanelHead>
    {children && <PanelBody>{children}</PanelBody>}
  </Panel>
);
const Field = styled.div`
  display: flex;
  align-items: center;
  height: ${(p) => p.$h || 24}px;
  gap: 2px;
  color: ${(p) => (p.$off ? "#aaa" : "#1c1c1c")};
  > span, > label { flex: 1; }
`;
const IconLabel = styled.span`
  display: flex;
  align-items: center;
  height: 32px;
  gap: 3px;
  background: ${(p) => (p.$hot ? "#fae57c" : "transparent")};
`;
const Boxed = styled(Plain)`
  width: ${(p) => p.$w || 24}px;
  height: ${(p) => p.$h || 24}px;
  border: 1px solid ${(p) => (p.$off ? "#ccc" : "#999")};
`;
const HotButton = styled(Plain)`
  width: 32px;
  height: 32px;
  background: #fae57c;
`;
const VectorButtons = styled.div`
  display: flex;
  align-items: center;
  gap: 2px;
`;
const Split = styled.div`
  display: flex;
  button + button { margin-left: -1px; }
`;
const TypeBox = styled(ComboBox)`
  width: 100%;
  height: 26px;
  > svg:first-child { justify-self: start; margin-left: 2px; }
`;
const AngleBox = styled.div`
  display: flex;
  align-items: center;
  width: 141px;
  height: 25px;
  border: 1px solid #999;
  background: #fff;
  input { width: 80px; height: 22px; padding: 0 5px; border: 0; background: transparent; }
  > svg { margin-right: 4px; }
`;
const UnitSelect = styled.select`
  appearance: none;
  flex: 1;
  padding: 0 4px;
  border: 0;
  background: transparent;
`;
const ListBar = styled.button`
  display: flex;
  align-items: center;
  justify-content: space-between;
  height: 24px;
  padding: 0 5px 0 8px;
  border: 1px solid #ddd;
  background: #ededed;
  color: ${teal};
`;
const Actions = styled.footer`
  display: flex;
  justify-content: flex-end;
  gap: 5px;
  padding: 12px 16px 10px;
`;
const Action = styled.button`
  width: 54px;
  height: 25px;
  padding: 0;
  border: 1px solid #aaa;
  background: ${(p) => (p.$main ? "#dcdcdc" : "#eee")};
  &:disabled { color: #a8a8a8; }
`;

const HOLES = [
  [702.5, 284.5, 66],
  [1161.5, 280.5, 65.5],
  [703.5, 610.5, 65.5],
  [1162, 605.5, 65.5],
];
const FACE_EDGE = "M566 226C534 267 511 322 511 390V520C512 660 628 770 770 770L1100 767.500 1460 766";
const INNER = FACE_EDGE + "V226z";
const OUTER = "M566 226C550 247 539 268 531 286C513 323 505 355 504.500 395V530C505 670 620 784 765 785L1050 783.500 1460 783V226z";

const Scene = () => (
  <svg viewBox="43 226 1414 726" preserveAspectRatio="xMinYMin slice" role="img" aria-label="模型视图">
    <defs>
      <linearGradient id="sky" gradientUnits="userSpaceOnUse" x1="0" y1="226" x2="0" y2="952">
        <stop offset="0" stopColor="#97bfdb" />
        <stop offset=".35" stopColor="#bbd0df" />
        <stop offset=".62" stopColor="#d9dfe3" />
        <stop offset=".8" stopColor="#e6e6e6" />
        <stop offset="1" stopColor="#e6e6e6" />
      </linearGradient>
      <linearGradient id="side" gradientUnits="userSpaceOnUse" x1="0" y1="500" x2="0" y2="700">
        <stop offset="0" stopColor="#7a9c36" />
        <stop offset="1" stopColor="#3f5210" />
      </linearGradient>
      <clipPath id="wall"><path d={OUTER} /></clipPath>
    </defs>
    <rect x="43" y="226" width="1417" height="730" fill="url(#sky)" />
    <path stroke="#222" d="M489.500 226V578" />
    <path stroke="#111" d="M489.500 644V952" />
    <circle cx="510" cy="627.500" r="29" fill="#cfea22" />
    <path d={OUTER} fill="url(#side)" stroke="#2c3810" />
    <g clipPath="url(#wall)">
      <path fill="#5f70e0" d="M505 601l16-4 18 34-4 13-10 0z" />
    </g>
    <path d={INNER} fill="#dcff3f" />
    <path fill="none" stroke="#33420f" strokeWidth="1.500" d={FACE_EDGE} />
    <path fill="none" stroke="#2c3810" strokeWidth="1" d="M504 396l6-8M505 528l7-12M766 784l7-14" />
    <path fill="#5f70e0" d="M517 600l8 0 14 32-3 10z" />
    <path fill="#f4f8e0" d="M530 608l5 6 3 16-5-8z" />
    {HOLES.map(([cx, cy, r]) => (
      <g key={`${cx}-${cy}`}>
        <circle cx={cx} cy={cy} r={r} fill="#2d3f14" />
        <circle cx={cx - 0.5} cy={cy + 1} r={r - 2} fill="url(#sky)" />
      </g>
    ))}
    <path stroke="#33391c" d="M333 611.500H457M529 611.500H1460" />
    <g stroke="#99a3a6" strokeWidth=".9" strokeDasharray="1 7" fill="none">
      <path d="M454 616L437 690M485 588L470 655M486 655L469 720M514 618L501 690" />
    </g>
    <path stroke="#ee1010" strokeWidth="4" strokeLinecap="round" fill="none" d="M500.500 515v18M511 533v-12l4-7" />
    <g transform="translate(511 627)">
      <path fill="#fff" stroke="#111" d="M6 3l18 18c1 3-2 6-5 4L2 8z" />
      <path stroke="#111" d="M6 9l15 15M18 25l6-5" />
      <path fill="#111" d="M0 0l7 2-4 6z" />
    </g>
    <g fontFamily="Open Sans, sans-serif" fontSize="12">
      <text x="1382" y="736" fill="#58b020">YC</text>
      <text x="1420" y="807" fill="#c04050">XC</text>
      <text x="1366" y="787" fill="#3040d8">ZC</text>
      <path fill="#9ad8a8" stroke="#6aa080" strokeWidth=".7" d="M1377.500 739l2 13-1.500 36h-1.500l-1-36z" />
      <path fill="#b88a10" stroke="#6a5010" strokeWidth=".6" d="M1378 784c3-3 7 0 6 4l-6 6z" />
      <path fill="#c02838" d="M1383 793l37-3 12 4-14 3z" />
    </g>
    <g fontFamily="Open Sans, sans-serif" fontSize="12">
      <rect x="103" y="865" width="23" height="25" fill="#dcd4de" stroke="#b08ab8" strokeWidth="1.500" />
      <path stroke="#2c9038" strokeWidth="2.500" d="M102 888V856" />
      <path fill="#2c9038" d="M102 850l3 11h-6z" />
      <path stroke="#c01828" strokeWidth="2" d="M104 890.500h30" />
      <path fill="#c01828" d="M142 890.500l-11 3v-6z" />
      <circle cx="102" cy="891" r="4" fill="#a4a8b8" />
      <path fill="#1c2cd8" d="M101 882h6l-1 7-5 2z" />
      <text x="98" y="850" fill="#4a9050" fontSize="11">Y</text>
      <text x="143" y="895" fill="#c03848" fontSize="13">X</text>
    </g>
  </svg>
);

const WinIcon = ({ d, w = 22, sw = 1.5, fill = "none", label }) => (
  <ToolButton $w={w} aria-label={label}>
    <svg width="16" height="16" viewBox="0 0 16 16"><path d={d} fill={fill} stroke="#333" strokeWidth={sw} /></svg>
  </ToolButton>
);

export default function App() {
  return (
    <Frame>
      <GlobalStyle />
      <TitleBar>
        <Logo>NX</Logo>
        <Rule $r={6} />
        <Tool n="save" label="保存" />
        <Rule $l={6} $r={0} $h={24} />
        <Tool n="undo" label="撤消" w={20} />
        <Drop w={16} />
        <Tool n="redo" label="重做" w={18} />
        <Rule $l={4} $r={3} />
        <Tool n="cut" label="剪切" />
        <Tool n="copy" label="复制" />
        <Tool n="paste" label="粘贴" />
        <Rule $l={2} $r={2} />
        <Tool n="win" label="窗口样式" />
        <Drop w={14} />
        <Rule $l={2} $r={2} />
        <Tool n="eraser" label="擦除" />
        <Rule $l={2} $r={0} />
        <LabelButton><Ico n="sw" s={20} /></LabelButton>
        <LabelButton>切换窗口</LabelButton>
        <LabelButton>
          <svg width="20" height="18" viewBox="0 0 20 18"><path fill="#e8f0fc" stroke="#2a44a8" strokeWidth="1.500" d="M2 2h14v14H2z" /><path fill="#3c60d8" d="M2 2h14v3H2z" /></svg>
          窗口
        </LabelButton>
        <Drop w={12} />
        <Drop w={10} bar />
        <Title>专业模具设计青宇老师 QQ：3266936670 - 建模 - [ZC-ABC-A-1 (186).prt （修改的） ]</Title>
        <Brand>SIEMENS</Brand>
        <WinIcon label="最小化" d="M4 13h9" w={20} sw={2} />
        <WinIcon label="最大化" d="M2.500 3.500h11v10h-11z" w={24} sw={1} />
        <WinIcon label="关闭" d="M3 3l10 10M13 3L3 13" w={22} sw={2} />
      </TitleBar>

      <TabBar>
        <FileTab>文件(F)</FileTab>
        {["主页", "曲线", "曲面", "分析", "视图", "应用模块", "燕秀UG模具3.02"].map((t, i) => (
          <Tab key={t} $on={i === 0}>{t}</Tab>
        ))}
        <Spacer />
        <Search>
          <input placeholder="查找命令" aria-label="查找命令" />
          <svg width="18" height="18" viewBox="0 0 18 18"><g fill="none" stroke="#444"><circle cx="10" cy="7" r="4.500" /><circle cx="10" cy="7" r="2" /><path strokeWidth="2" d="M7 10l-5 5" /></g></svg>
        </Search>
        <ToolButton $w={26} $h={26} aria-label="全屏">
          <svg width="26" height="26" viewBox="0 0 26 26">
            <path fill="none" stroke="#888" strokeWidth="2" d="M2 8V2h6M18 2h6v6M24 18v6h-6M8 24H2v-6" />
            <path fill="#fff" stroke="#333" strokeWidth="1.500" d="M5 6h16v15H5z" /><path fill="#3a7ac4" d="M8 9h10v9H8z" /><path fill="#1c4a94" d="M8 9h10v3H8z" />
          </svg>
        </ToolButton>
        <ToolButton $w={44} aria-label="收起功能区">
          <svg width="22" height="18" viewBox="0 0 22 18"><path fill="#fff" stroke="#333" d="M1.500 12l9.500-9 9.500 9-3 3L11 8.500 4.500 15z" /></svg>
        </ToolButton>
        <ToolButton $w={22} aria-label="帮助">
          <svg width="20" height="20" viewBox="0 0 20 20"><circle cx="10" cy="10" r="9" fill="#4a6ccc" stroke="#3454a8" /><path fill="none" stroke="#fff" strokeWidth="2.200" d="M7 8c0-4 6-4 6-.5C13 10 10 10 10 12.500M10 14v2" /></svg>
        </ToolButton>
        <WinIcon label="最小化部件" d="M4 13h8" w={26} sw={2} />
        <WinIcon label="还原部件" d="M5 3.500h9v6H5zM2 7.500h9v6H2z" w={20} fill="#dcdcdc" />
        <WinIcon label="关闭部件" d="M3 3l10 10M13 3L3 13" w={26} sw={2.2} />
      </TabBar>

      <Ribbon>
        <Group w={112} name="直接草图">
          <BigTool n="sketch" w={57} label="草图" />
          <Gallery>
            <svg width="26" height="24" viewBox="0 0 26 24"><path fill="none" stroke="#444" strokeWidth="1.200" d="M3 2v10c0 9 10 9 10 0 0-8 9-8 9 0v5" /><g fill="#c02838"><circle cx="3" cy="13" r="2" /><circle cx="13" cy="13" r="2" /><circle cx="22" cy="13" r="2" /></g></svg>
            <svg width="26" height="22" viewBox="0 0 26 22"><path fill="none" stroke="#444" strokeWidth="1.200" d="M4 4h19v13H4z" /><g fill="#c02838"><circle cx="4" cy="4" r="2" /><circle cx="23" cy="17" r="2" /></g></svg>
          </Gallery>
          <GalleryNav><Drop c="#bbb" /><Drop /><Drop bar /></GalleryNav>
        </Group>
        <Group w={369} pad={9} name="特征">
          <BigTool n="plane" w={50} label="基准平面" arrow />
          <BigTool n="extrude" w={42} label="拉伸" arrow />
          <BigTool n="hole" w={38} label="孔" />
          <Stack $w={70} $l={6}>
            <TextTool><Ico n="pattern" s={18} />阵列特征</TextTool>
            <TextTool><Ico n="unite" s={18} />合并<Drop w={14} /></TextTool>
            <TextTool><Ico n="shell" s={18} />抽壳</TextTool>
          </Stack>
          <BigTool n="blend" w={44} label="边倒圆" arrow />
          <Stack $w={64} $l={2}>
            <TextTool><Ico n="chamfer" s={18} />倒斜角</TextTool>
            <TextTool><Ico n="trim" s={18} />修剪体</TextTool>
            <TextTool><Ico n="draft" s={18} />拔模</TextTool>
          </Stack>
          <BigTool n="more1" w={40} label="更多" arrow framed />
        </Group>
        <Group w={124} pad={2} name="同步建模">
          <BigTool n="move" w={52} label="移动面" />
          <Stack $w={18}>
            <Tool n="mf1" w={16} s={20} /><Tool n="mf2" w={16} s={20} /><Tool n="mf3" w={16} s={20} />
          </Stack>
          <Stack $w={38} $l={8}><BigTool n="more2" w={38} label="更多" arrow framed /></Stack>
        </Group>
        <GroupBox $w={43}><BigTool n="surface" w={42} label="曲面" arrow /></GroupBox>
        <Group w={104} pad={3} name="标准化工具 - G...">
          <Tools rows={["std1 layers layers2 | tag", "chk1 chk2 chk3 | boxar"]} />
        </Group>
        <Group w={52} pad={3} name="齿轮..."><Tools rows={["gear1 gear2", "gear3"]} /></Group>
        <Group w={58} pad={4} name="弹簧..."><Tools rows={["spring1 spring2", "spring3 | spring4"]} /></Group>
        <Group w={52} pad={3} name="加工..."><Tools rows={["mach1 mach2", "mach3 mach4"]} /></Group>
        <Group w={98} pad={3} name="建模工具 - G..."><Tools rows={["tri tbl fold1 fold2", "note brush | find"]} /></Group>
        <Group w={30} pad={3} name="?.."><Tools rows={["gbox1", "gbox2"]} /></Group>
        <Group w={287} pad={3} name="尺寸快速格式化工具 - GC工具箱">
          <Tools rows={["dim | x t1 t2 t3 t4 boxx parx f1 f2 f3 f4", "lead1 lead2 | dia1 dia2 ret"]} />
        </Group>
        <Group w={84} name="装配">
          <Stack $w={46} $l={10}>
            <Rows>
              <Row><Tool n="asm0" w={26} s={22} /></Row>
              <Row><Tool n="asm1" w={26} s={24} h={30} /><Drop w={20} /></Row>
            </Rows>
          </Stack>
          <Stack $w={18}>
            <Tool n="mir" w={18} s={18} /><Tool n="asm2" w={18} s={18} /><Tool n="asm3" w={18} s={18} />
          </Stack>
        </Group>
        <Group />
      </Ribbon>

      <SelectionBar>
        <MenuButton><Ico n="menu" /><span>菜单(<u>M</u>)</span><Down /></MenuButton>
        <Rule $h={38} $l={1} $r={12} />
        <Combo w={56} gap={8} label="类型过滤器" value="全部" />
        <Combo w={133} gap={10} label="细节过滤器" value="边" />
        <Combo w={140} gap={4} label="选择范围" value="仅在工作部件内" />
        <Tool n="s1" w={24} /><Tool n="s2" w={24} /><Tool n="s3" />
        <Drop w={12} />
        <Tool n="s4" w={26} /><Tool n="s5" w={26} /><Tool n="s6" w={24} />
        <Drop w={12} />
        <Tool n="s7" w={24} /><Tool n="s8" w={28} />
        <Combo w={140} gap={7} label="曲线规则" value="相切曲线" />
        <Tool n="s9" w={24} /><Tool n="s10" w={24} /><Tool n="s11" w={26} /><Tool n="s12" w={24} /><Tool n="s13" w={25} /><Tool n="s14" w={24} />
        <Cluster>
          <Tool n="n1" /><Tool n="n2" /><Tool n="n3" /><Tool n="n4" w={28} /><Tool n="v1" /><Tool n="v2" /><Tool n="v3" w={28} /><Tool n="v6" w={26} />
          <Tool n="n5" /><Tool n="n6" /><Tool n="n7" /><LabelButton>保存视图</LabelButton><Tool n="v4" /><Tool n="v5" />
          <LabelButton><span>形状(<u>H</u>)</span><Down /></LabelButton>
          <LabelButton>设置镜像平面...</LabelButton>
        </Cluster>
        <Rule $h={38} $l={1} $r={8} />
        <Tool n="w1" w={24} />
        <ViewCluster>
          <Tool n="w2" /><Tool n="w3" /><Drop /><Tool n="w4" /><Drop />
          <Tool n="w5" /><Tool n="w6" /><Drop /><Tool n="w7" /><Drop />
        </ViewCluster>
        <Rule $h={38} $l={4} $r={4} />
        <BarEnd><Drop /></BarEnd>
      </SelectionBar>
      <CueLine>
        <p>为新集选择 固定边</p>
        <Tool n="flags" w={20} h={18} s={18} /><Tool n="full" w={20} h={18} s={18} />
      </CueLine>

      <WorkArea>
        <Canvas><Scene /></Canvas>
        <ResourceBar><Tool n="role" w={31} h={18} s={18} label="角色" /></ResourceBar>
        <Dialog onSubmit={(e) => e.preventDefault()}>
          <DialogHead>
            <Ico n="gearw" s={22} />
            <h2>拔模</h2>
            <Tool n="reset" w={20} s={16} label="重置" /><Tool n="close" w={20} s={18} label="关闭" />
          </DialogHead>
          <Section name="类型" first>
            <TypeBox>
              <Ico n="draftSel" />
              <Select $pad={24} aria-label="类型"><option>边</option></Select>
              <Down wide />
            </TypeBox>
          </Section>
          <Section name="脱模方向">
            <Field $h={34}>
              <IconLabel><Ico n="ok" s={17} />指定矢量</IconLabel>
              <VectorButtons>
                <Boxed type="button" aria-label="反向"><Ico n="rev" /></Boxed>
                <Boxed type="button" aria-label="矢量对话框"><Ico n="vec" /></Boxed>
                <Split>
                  <Boxed type="button" $w={33} $h={32} aria-label="自动判断的矢量"><Ico n="flash" s={22} /></Boxed>
                  <Boxed type="button" $w={17} $h={32} aria-label="矢量类型"><Down /></Boxed>
                </Split>
              </VectorButtons>
            </Field>
          </Section>
          <Section name="固定边">
            <Field $h={32}>
              <IconLabel $hot><Ico n="star" s={17} />选择边 (0)</IconLabel>
              <HotButton type="button" aria-label="选择边"><Ico n="edge" s={24} /></HotButton>
            </Field>
            <Field $off><span>反侧</span><Boxed type="button" $off disabled aria-label="反侧"><Ico n="revOff" /></Boxed></Field>
            <Field $h={25}>
              <label htmlFor="angle">角度 1</label>
              <AngleBox>
                <input id="angle" defaultValue="-2" />
                <UnitSelect aria-label="单位"><option>deg</option></UnitSelect>
                <Down wide />
              </AngleBox>
            </Field>
            <Field $off><span>添加新集</span><Boxed type="button" $off disabled aria-label="添加新集"><Ico n="addset" s={16} /></Boxed></Field>
            <ListBar type="button">列表<Chevron /></ListBar>
          </Section>
          <Section name="可变拔模点" />
          <Section name="设置" />
          <Section name="预览" />
          <Actions>
            <Action disabled>确定</Action>
            <Action disabled>应用</Action>
            <Action type="button" $main>取消</Action>
          </Actions>
        </Dialog>
      </WorkArea>
    </Frame>
  );
}
